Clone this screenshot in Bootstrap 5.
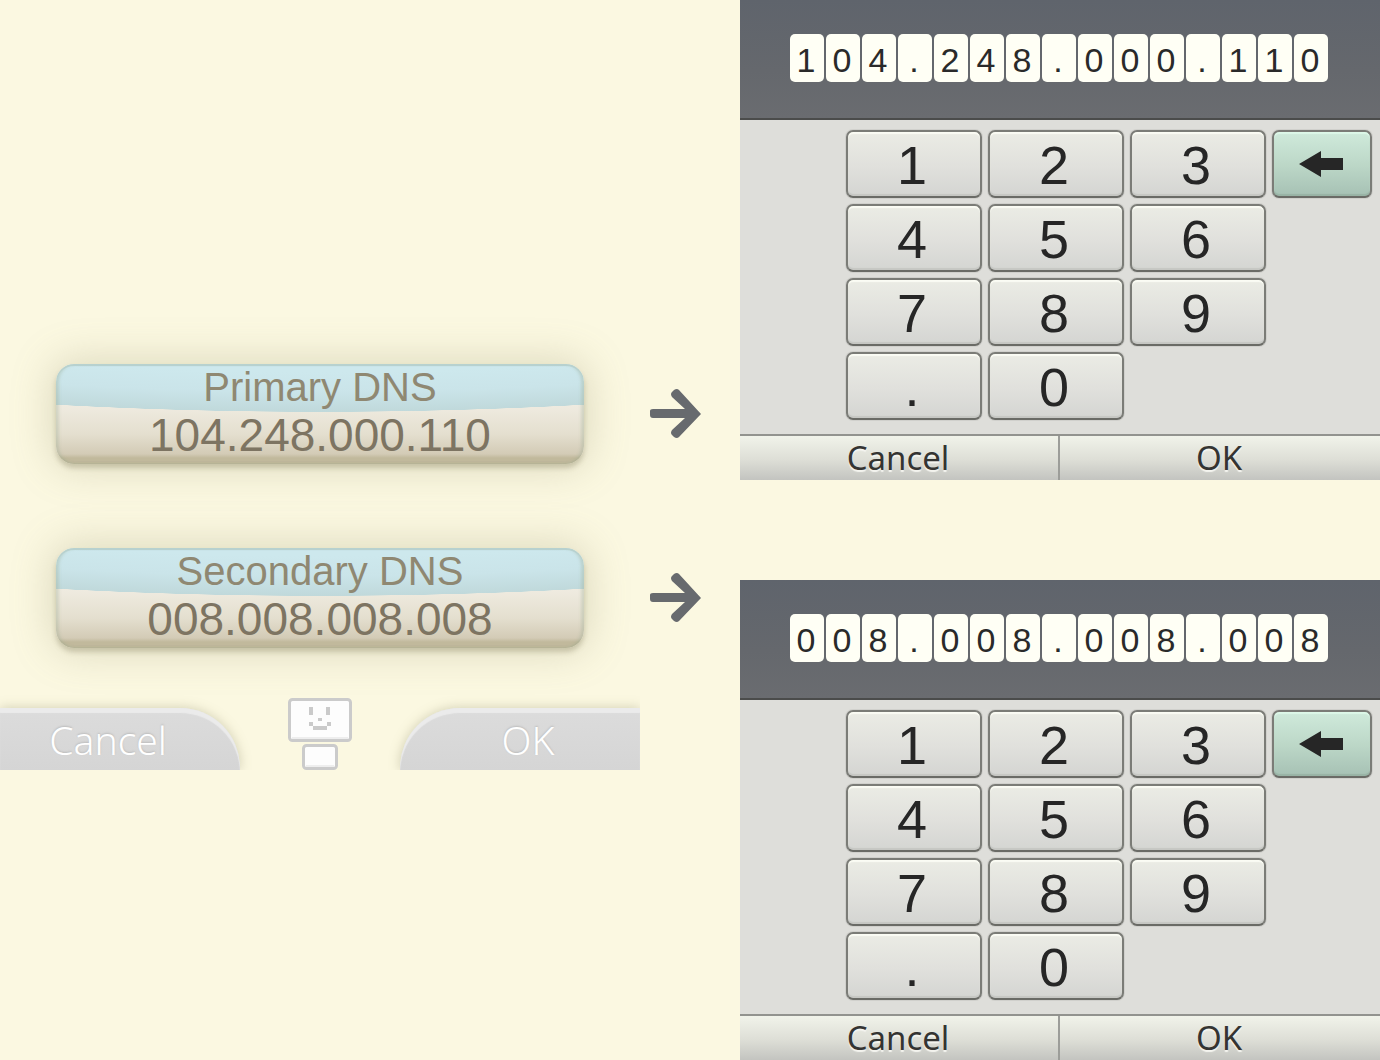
<!DOCTYPE html>
<html lang="en">
<head>
<meta charset="utf-8">
<meta name="viewport" content="width=device-width, initial-scale=1">
<title>DNS settings</title>
<link href="https://cdn.jsdelivr.net/npm/bootstrap@5.3.0/dist/css/bootstrap.min.css" rel="stylesheet">
<style>
body { background: #fbf8e1; font-family: "Liberation Sans", Arial, sans-serif; color: #2a2a2a; }
button { border: 0; padding: 0; }
.dns-page { display: grid; grid-template-columns: 32fr 5fr 32fr; align-items: center; min-height: 100vh; }
.dns-screen { min-height: 480px; overflow: hidden; padding-top: 74px; }
.dns-list { padding: 0 56px; gap: 84px; }
.dns-entry {
  height: 100px; border-radius: 18px; color: #7d7462;
  background:
    radial-gradient(ellipse 1000px 200px at 50% -152px, #cde8ed 80%, #cae4e9 90%, #c0d9db 99.8%, transparent 100%),
    linear-gradient(#efebe0 42px, #e4dfcf 70px, #d3cbb6 90px, #c1b99c 94px, #c1b99c);
  box-shadow: inset 0 2px 0 #b7d1cf, inset 3px 0 3px rgba(150,165,140,.3), inset -3px 0 3px rgba(150,165,140,.3),
    0 4px 5px rgba(120,112,80,.3), 0 0 40px 4px rgba(145,140,100,.28);
}
.dns-entry-title { height: 48px; font-size: 40px; line-height: 46px; color: #8f8872; }
.dns-entry-value { height: 52px; font-size: 46px; line-height: 46px; }
.dns-tab {
  width: 37.5%; height: 62px; font: 300 39px/64px "Noto Sans", sans-serif; color: #fff;
  background: linear-gradient(#dcdcdc, #d5d5d5); text-shadow: 0 -1px 2px #bbb;
  box-shadow: inset 0 5px 1px #ebebeb, 0 0 12px rgba(130,125,90,.35);
}
.dns-tab-cancel { border-radius: 0 60px 0 0; padding-right: 24px; }
.dns-tab-ok { border-radius: 60px 0 0 0; padding-left: 16px; }
.dns-arrows { height: 480px; padding: 74px 0 0 10px; gap: 84px; }
.dns-arrows > div { height: 100px; }
.dns-panels { gap: 100px; }
.pad-panel { background: #dededa; height: 480px; }
.pad-head { height: 120px; padding-top: 34px; background: linear-gradient(#5f646c, #65686d 60%, #6a6c70); border-bottom: 2px solid #4b4c4b; }
.pad-digits { gap: 2px; margin-right: 2px; }
.pad-digits span { width: 34px; height: 48px; padding-right: 2px; border-radius: 5px; background: #fffff5; font-size: 34px; line-height: 52px; text-align: center; }
.pad-keys { display: grid; grid-template-columns: 136fr 136fr 136fr 100fr; grid-auto-rows: 68px; gap: 6px; padding: 10px 8px 0 106px; }
.pad-key {
  border: 2px solid #7b7c77; border-bottom-color: #6a6b66; border-radius: 7px;
  background: linear-gradient(#ebece5, #e0e0dc 55%, #d4d5d2); color: #262626;
  box-shadow: inset 0 2px 1px #fbfcf4, inset 0 -2px 1px #c6c7c3, 0 0 0 1px #d0d0cc; font-size: 54px; line-height: 66px; padding: 0 4px 2px 0;
}
.pad-back { display: flex; align-items: center; justify-content: center; background: linear-gradient(#cfeadb, #bdd8c8 50%, #a6c1b4); box-shadow: inset 0 2px 1px #ddf8e8, inset 0 -2px 1px #98b3a5, 0 0 0 1px #d0d0cc; padding: 0 2px 0 0; }
.pad-new { grid-column: 1; }
.pad-foot { height: 46px; border-top: 2px solid #92938f; }
.pad-foot button { font: 33px/42px "Noto Sans", sans-serif; color: #343432; text-shadow: 0 2px 1px #f5f5f0; background: linear-gradient(#f1f3ea, #dddeD6 55%, #c3c4c0); padding-right: 2px; }
.pad-foot button:first-child { border-right: 2px solid #9c9d99; }
</style>
<script src="https://cdn.jsdelivr.net/npm/bootstrap@5.3.0/dist/js/bootstrap.bundle.min.js"></script>
</head>
<body>
<main class="dns-page">
  <section class="dns-screen d-flex flex-column" aria-label="DNS settings">
    <div class="dns-list d-flex flex-column">
      <button type="button" class="dns-entry w-100"><span class="dns-entry-title d-block">Primary DNS</span><span class="dns-entry-value d-block">104.248.000.110</span></button>
      <button type="button" class="dns-entry w-100"><span class="dns-entry-title d-block">Secondary DNS</span><span class="dns-entry-value d-block">008.008.008.008</span></button>
    </div>
    <div class="d-flex justify-content-between align-items-end mt-auto">
      <button type="button" class="dns-tab dns-tab-cancel">Cancel</button>
      <svg width="64" height="72" viewBox="0 0 64 72" aria-hidden="true">
        <g fill="#fdfdfd" stroke="#cbcbcb" stroke-width="3"><rect x="1.5" y="1.5" width="61" height="41" rx="3"/><rect x="15.500" y="47.500" width="33" height="23" rx="3"/></g>
        <path fill="none" stroke="#eee" stroke-width="2" d="M4 40h56M18 68h28"/>
        <path fill="#cacaca" d="M21 9h4v8h-4zM38 9h4v8h-4zM30 20h4v3h-4zM21 24h4v4h-4zM39 24h4v4h-4zM25 28h14v4H25z"/>
      </svg>
      <button type="button" class="dns-tab dns-tab-ok">OK</button>
    </div>
  </section>

  <div class="dns-arrows d-flex flex-column" aria-hidden="true">
    <div class="d-flex align-items-center"><svg width="52" height="52" viewBox="0 0 52 52"><path fill="#676a6e" d="M3 21h32L22 9q-2-3 0-5l2-2q3-2 5 0l22 24-22 23q-2 2-5 0l-2-2q-2-2 0-5l13-12H3q-3 0-3-3v-4q0-2 3-2z"/></svg></div>
    <div class="d-flex align-items-center"><svg width="52" height="52" viewBox="0 0 52 52"><path fill="#676a6e" d="M3 21h32L22 9q-2-3 0-5l2-2q3-2 5 0l22 24-22 23q-2 2-5 0l-2-2q-2-2 0-5l13-12H3q-3 0-3-3v-4q0-2 3-2z"/></svg></div>
  </div>

  <div class="dns-panels d-flex flex-column">
    <section class="pad-panel d-flex flex-column" aria-label="Primary DNS keypad">
      <div class="pad-head">
        <output class="pad-digits d-flex justify-content-center"><span>1</span><span>0</span><span>4</span><span>.</span><span>2</span><span>4</span><span>8</span><span>.</span><span>0</span><span>0</span><span>0</span><span>.</span><span>1</span><span>1</span><span>0</span></output>
      </div>
      <div class="pad-keys">
        <button type="button" class="pad-key">1</button>
        <button type="button" class="pad-key">2</button>
        <button type="button" class="pad-key">3</button>
        <button type="button" class="pad-key pad-back" aria-label="Backspace"><svg width="44" height="26" viewBox="0 0 44 26"><path fill="#262626" d="M0 13 22 0v7h22v12H22v7z"/></svg></button>
        <button type="button" class="pad-key pad-new">4</button>
        <button type="button" class="pad-key">5</button>
        <button type="button" class="pad-key">6</button>
        <button type="button" class="pad-key pad-new">7</button>
        <button type="button" class="pad-key">8</button>
        <button type="button" class="pad-key">9</button>
        <button type="button" class="pad-key pad-new">.</button>
        <button type="button" class="pad-key">0</button>
      </div>
      <div class="pad-foot d-flex mt-auto"><button type="button" class="w-50">Cancel</button><button type="button" class="w-50">OK</button></div>
    </section>

    <section class="pad-panel d-flex flex-column" aria-label="Secondary DNS keypad">
      <div class="pad-head">
        <output class="pad-digits d-flex justify-content-center"><span>0</span><span>0</span><span>8</span><span>.</span><span>0</span><span>0</span><span>8</span><span>.</span><span>0</span><span>0</span><span>8</span><span>.</span><span>0</span><span>0</span><span>8</span></output>
      </div>
      <div class="pad-keys">
        <button type="button" class="pad-key">1</button>
        <button type="button" class="pad-key">2</button>
        <button type="button" class="pad-key">3</button>
        <button type="button" class="pad-key pad-back" aria-label="Backspace"><svg width="44" height="26" viewBox="0 0 44 26"><path fill="#262626" d="M0 13 22 0v7h22v12H22v7z"/></svg></button>
        <button type="button" class="pad-key pad-new">4</button>
        <button type="button" class="pad-key">5</button>
        <button type="button" class="pad-key">6</button>
        <button type="button" class="pad-key pad-new">7</button>
        <button type="button" class="pad-key">8</button>
        <button type="button" class="pad-key">9</button>
        <button type="button" class="pad-key pad-new">.</button>
        <button type="button" class="pad-key">0</button>
      </div>
      <div class="pad-foot d-flex mt-auto"><button type="button" class="w-50">Cancel</button><button type="button" class="w-50">OK</button></div>
    </section>
  </div>
</main>
</body>
</html>
